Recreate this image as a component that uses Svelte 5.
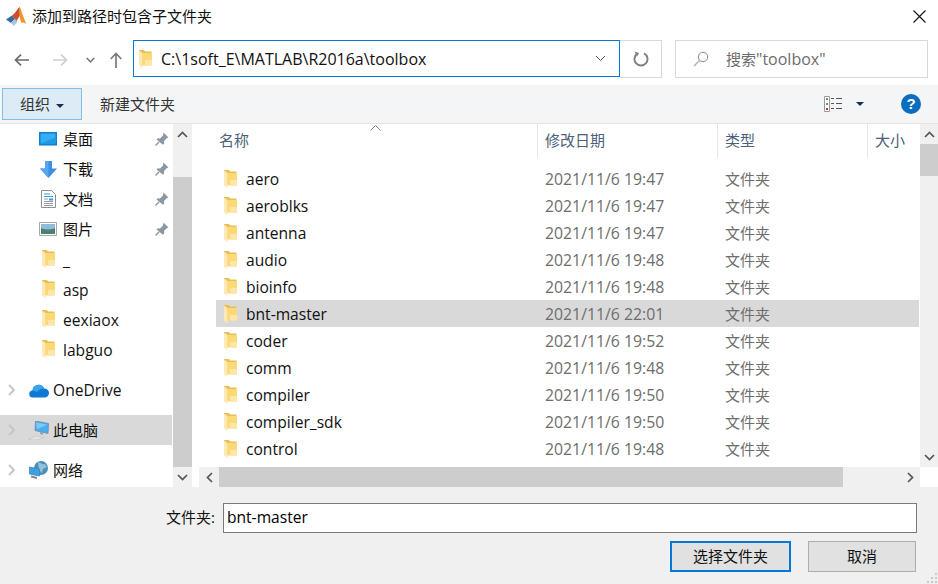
<script>
  const quick = [
    { name: '桌面', icon: 'desktop', pin: true },
    { name: '下载', icon: 'download', pin: true },
    { name: '文档', icon: 'doc', pin: true },
    { name: '图片', icon: 'pic', pin: true },
    { name: '_', icon: 'folder' },
    { name: 'asp', icon: 'folder' },
    { name: 'eexiaox', icon: 'folder' },
    { name: 'labguo', icon: 'folder' }
  ]

  const files = [
    ['aero', '2021/11/6 19:47'],
    ['aeroblks', '2021/11/6 19:47'],
    ['antenna', '2021/11/6 19:47'],
    ['audio', '2021/11/6 19:48'],
    ['bioinfo', '2021/11/6 19:48'],
    ['bnt-master', '2021/11/6 22:01'],
    ['coder', '2021/11/6 19:52'],
    ['comm', '2021/11/6 19:48'],
    ['compiler', '2021/11/6 19:50'],
    ['compiler_sdk', '2021/11/6 19:50'],
    ['control', '2021/11/6 19:48']
  ]
</script>

{#snippet folder()}
  <svg class="ico-folder" width="13" height="18" viewBox="0 0 13 18">
    <path d="M0 0h5l1 1.500h6.500V15H0z" fill="#e9bd57" />
    <path d="M3.500 3h9.500v12.500H3.500z" fill="#fbd977" />
    <path d="M6 10h7v5.500H6z" fill="#fde6a6" />
    <path d="M0 .5l3.500 2.500v15L0 15.500z" fill="#fce9b4" />
  </svg>
{/snippet}

{#snippet chevron()}
  <svg width="10" height="14" viewBox="0 0 10 14"><path d="M2 2l5 5-5 5" fill="none" stroke="#c4c4c4" stroke-width="1.800" /></svg>
{/snippet}

{#snippet pin()}
  <svg width="14" height="14" viewBox="0 0 14 14">
    <path d="M8.500.5l5 5-1.500.5-3 3 .2 2.500-1.200 1.200L1.500 7.500 2.700 6.300 5 6.500l3-3z" fill="#8a98a5" />
    <path d="M4 10L.5 13.500" stroke="#8a98a5" stroke-width="1.400" />
  </svg>
{/snippet}

<div class="dialog">
  <header class="title">
    <svg width="21" height="20" viewBox="0 0 21 20">
      <path d="M0 12.500l6-4 3 3.500-4 4z" fill="#2f6ea5" />
      <path d="M5 16l4-4 2.500 2.500L8 19z" fill="#a9c6dc" />
      <path d="M6 8.500C9 7 11 2 13.500 0l2 6-5 8z" fill="#c9502a" />
      <path d="M13.500 0c2 3 4 11 7 17-2-1.500-4-2-5-1-1.500-4-3-9-2-16z" fill="#f0962c" />
    </svg>
    <span>添加到路径时包含子文件夹</span>
    <svg class="close" width="13" height="13" viewBox="0 0 13 13"><path d="M.5.500l12 12M12.500.500l-12 12" stroke="#111" stroke-width="1.100" /></svg>
  </header>

  <div class="nav">
    <div class="arrows">
      <svg width="15" height="12" viewBox="0 0 15 12"><path d="M15 6H1.500M7 .7L1.500 6 7 11.300" fill="none" stroke="#6a6a6a" stroke-width="1.700" /></svg>
      <svg class="fwd" width="15" height="12" viewBox="0 0 15 12"><path d="M0 6h13.500M8 .7L13.500 6 8 11.300" fill="none" stroke="#cfcfcf" stroke-width="1.700" /></svg>
      <svg class="down" width="9" height="6" viewBox="0 0 9 6"><path d="M.7 1l3.800 3.800L8.300 1" fill="none" stroke="#7a7a7a" stroke-width="1.600" /></svg>
      <svg class="up" width="12" height="16" viewBox="0 0 12 16"><path d="M6 16V1.500M.7 7L6 1.500 11.300 7" fill="none" stroke="#7a7a7a" stroke-width="1.700" /></svg>
    </div>
    <div class="address">
      {@render folder()}
      <span class="path">C:\1soft_E\MATLAB\R2016a\toolbox</span>
      <svg width="11" height="7" viewBox="0 0 11 7"><path d="M1 1l4.500 4.500L10 1" fill="none" stroke="#555" stroke-width="1" /></svg>
    </div>
    <div class="refresh">
      <svg width="16" height="16" viewBox="0 0 16 16"><path d="M5 2.300A6.500 6.500 0 1 0 11 2.300" fill="none" stroke="#808080" stroke-width="1.900" /><path d="M1.500 .5l4.500 1.500-2 3.500z" fill="#808080" /></svg>
    </div>
    <div class="search">
      <svg width="16" height="16" viewBox="0 0 16 16"><circle cx="10" cy="6" r="4.700" fill="none" stroke="#8a8a8a" /><path d="M6.500 9.500L1 15" stroke="#c0a890" stroke-width="1.200" /></svg>
      <span><b>搜索</b>"toolbox"</span>
    </div>
  </div>

  <div class="toolbar">
    <button class="organize"><span>组织</span> <i class="caret"></i></button>
    <span class="newdir">新建文件夹</span>
    <div class="spacer"></div>
    <svg width="19" height="16" viewBox="0 0 19 16">
      <path d="M.5.500h5v15h-5z" fill="#fff" stroke="#9a9a9a" />
      <path d="M2 2h2v2H2zM2 7h2v2H2z" fill="#6a8a6a" /><path d="M2 12h2v2H2z" fill="#c0392b" />
      <path d="M7 2.500h3M12 2.500h6M7 7.500h3M12 7.500h6M7 12.500h3M12 12.500h6" stroke="#555" />
    </svg>
    <i class="caret view"></i>
    <div class="help">?</div>
  </div>

  <main class="body">
    <aside class="tree">
      {#each quick as item}
        <div class="tree-row">
          <div class="tree-icon">
            {#if item.icon === 'folder'}
              {@render folder()}
            {:else if item.icon === 'desktop'}
              <svg width="18" height="14" viewBox="0 0 18 14"><path d="M0 0h18v13.500H0z" fill="#0f7fd0" /><path d="M1.500 1.500h15v10h-15z" fill="#35aef5" /><path d="M1.500 11.500l15-6v6z" fill="#1f98e6" /></svg>
            {:else if item.icon === 'download'}
              <svg width="17" height="17" viewBox="0 0 17 17"><path d="M5 0h7v7.500h5L8.500 17 0 7.500h5z" fill="#3f8fe0" /><path d="M5 0h3.500v17L0 7.500h5z" fill="#5aa5ee" /></svg>
            {:else if item.icon === 'doc'}
              <svg width="15" height="18" viewBox="0 0 15 18"><path d="M.5.500h10l4 4v13H.5z" fill="#fff" stroke="#8f8f8f" /><path d="M3 4h6M3 6.500h9" stroke="#3b97e0" /><path d="M8 8.500h4v2H8z" fill="#3b97e0" /><path d="M3 9h4M3 11.500h9M3 13.500h9M3 15.500h9" stroke="#9a9a9a" /></svg>
            {:else}
              <svg width="18" height="14" viewBox="0 0 18 14"><path d="M.5.500h17v13H.5z" fill="#fff" stroke="#a8a8a8" /><path d="M2 2h14v5H2z" fill="#8fbcd8" /><path d="M2 7h14v5H2z" fill="#5f8f86" /><path d="M2 6l7 3 7-3v6H2z" fill="#4d7f70" /></svg>
            {/if}
          </div>
          <span class="label" class:latin={item.icon === 'folder'}>{item.name}</span>
          {#if item.pin}{@render pin()}{/if}
        </div>
      {/each}
      <div class="tree-root first">
        {@render chevron()}
        <div class="root-icon">
          <svg width="20" height="15" viewBox="0 0 20 15"><path d="M4 14.500a3.500 3.500 0 0 1-.5-7A6 6 0 0 1 15 5.500a4.500 4.500 0 0 1 5 4.500 4.500 4.500 0 0 1-4.500 4.500z" fill="#0f78d4" /><path d="M3.500 7.500A6 6 0 0 1 15 5.500C11 6 9 8 8 9c-2-1.500-3.500-1.500-4.500-1.500z" fill="#38a3ec" /></svg>
        </div>
        <span class="latin">OneDrive</span>
      </div>
      <div class="tree-root sel">
        {@render chevron()}
        <div class="root-icon">
          <svg width="22" height="19" viewBox="0 0 22 19"><path d="M7.500 0l13 2.500-.5 10-13-3z" fill="#48aeee" stroke="#6d8ca6" stroke-width=".8" /><path d="M8 1.500l11.500 2.300L9 8z" fill="#7ccbf6" /><path d="M12 11l3 .7v2l-3-.7z" fill="#8fa0ac" /><path d="M0 18.500l9-3.500 7 1.500-8 2.500z" fill="#e4e4e4" stroke="#bdbdbd" stroke-width=".5" /></svg>
        </div>
        <span>此电脑</span>
      </div>
      <div class="tree-root">
        {@render chevron()}
        <div class="root-icon">
          <svg width="20" height="18" viewBox="0 0 20 18"><circle cx="12" cy="7" r="7" fill="#4e8fb8" /><path d="M9 1c3 1 5 3 7 2l2 3-4 2-1 4-3-3z" fill="#8fc2dc" /><path d="M.5 6l10 2v7l-10-2z" fill="#35a2ee" stroke="#54809f" stroke-width=".8" /><path d="M2 15.500l6 1.500" stroke="#7d8c98" stroke-width="2" /></svg>
        </div>
        <span>网络</span>
      </div>
    </aside>

    <div class="vbar tree-bar">
      <div class="cap"><svg width="11" height="7" viewBox="0 0 11 7"><path d="M1 6l4.500-4.500L10 6" fill="none" stroke="#555" stroke-width="1.700" /></svg></div>
      <div class="thumb"></div>
      <div class="cap bottom"><svg width="11" height="7" viewBox="0 0 11 7"><path d="M1 1l4.500 4.500L10 1" fill="none" stroke="#555" stroke-width="1.700" /></svg></div>
    </div>

    <section class="listing">
      <div class="listing-top">
        <div class="table">
          <div class="head">
            <div class="col name">名称
              <svg class="sort" width="11" height="6" viewBox="0 0 11 6"><path d="M.5 5.500l5-5 5 5" fill="none" stroke="#8a8a8a" /></svg>
            </div>
            <div class="col date">修改日期</div>
            <div class="col type">类型</div>
            <div class="col size">大小</div>
          </div>
          <div class="rows">
            {#each files as f}
              <div class="row" class:sel={f[0] === 'bnt-master'}>
                <div class="cell-name">{@render folder()}<span>{f[0]}</span></div>
                <div class="cell-date">{f[1]}</div>
                <div class="cell-type">文件夹</div>
              </div>
            {/each}
          </div>
        </div>
        <div class="vbar list-bar">
          <div class="cap"><svg width="11" height="7" viewBox="0 0 11 7"><path d="M1 6l4.500-4.500L10 6" fill="none" stroke="#555" stroke-width="1.700" /></svg></div>
          <div class="thumb"></div>
          <div class="track"></div>
          <div class="cap"><svg width="11" height="7" viewBox="0 0 11 7"><path d="M1 1l4.500 4.500L10 1" fill="none" stroke="#555" stroke-width="1.700" /></svg></div>
        </div>
      </div>
      <div class="hbar">
        <div class="hcap"><svg width="7" height="11" viewBox="0 0 7 11"><path d="M6 1L1.500 5.500 6 10" fill="none" stroke="#555" stroke-width="1.700" /></svg></div>
        <div class="hthumb"></div>
        <div class="htrack"></div>
        <div class="hcap"><svg width="7" height="11" viewBox="0 0 7 11"><path d="M1 1l4.500 4.500L1 10" fill="none" stroke="#555" stroke-width="1.700" /></svg></div>
        <div class="corner"></div>
      </div>
    </section>
  </main>

  <footer class="foot">
    <div class="name-row">
      <label for="dir">文件夹:</label>
      <input id="dir" value="bnt-master" />
    </div>
    <div class="btn-row">
      <button class="btn primary">选择文件夹</button>
      <button class="btn">取消</button>
    </div>
    <svg class="grip" width="12" height="12" viewBox="0 0 12 12"><path d="M9 1h2v2H9zM5 5h2v2H5zM9 5h2v2H9zM1 9h2v2H1zM5 9h2v2H5zM9 9h2v2H9z" fill="#c8c8c8" /></svg>
  </footer>
</div>

<style>
  :global(body) {
    margin: 0;
    background: #fff;
  }

  .dialog {
    width: 938px;
    height: 584px;
    position: relative;
    overflow: hidden;
    display: flex;
    flex-direction: column;
    font-family: 'Open Sans', 'Noto Sans CJK SC', sans-serif;
    font-size: 15px;
    color: #111;
  }

  .title {
    height: 33px;
    display: flex;
    align-items: center;
    padding: 0 12px 0 6px;
    gap: 5px;
    flex: none;
  }

  .title span {
    flex: 1;
    padding-bottom: 2px;
  }

  .nav {
    height: 52px;
    flex: none;
    display: flex;
    align-items: flex-start;
    padding-top: 7px;
    box-sizing: border-box;
  }

  .arrows {
    width: 133px;
    height: 38px;
    flex: none;
    display: flex;
    align-items: center;
    padding: 2px 0 0 14px;
    box-sizing: border-box;
  }

  .fwd {
    margin-left: 24px;
  }

  .down {
    margin-left: 18px;
  }

  .up {
    margin-left: 15px;
  }

  .address {
    width: 487px;
    height: 37px;
    flex: none;
    border: 1px solid #0078d7;
    box-sizing: border-box;
    display: flex;
    align-items: center;
    padding: 0 13px 0 5px;
    gap: 9px;
  }

  .path {
    flex: 1;
    font-size: 16px;
  }

  .refresh {
    width: 42px;
    height: 38px;
    flex: none;
    box-sizing: border-box;
    border: 1px solid #d9d9d9;
    border-left: none;
    display: flex;
    align-items: center;
    justify-content: center;
  }

  .search {
    width: 253px;
    height: 38px;
    margin-left: 13px;
    box-sizing: border-box;
    border: 1px solid #d9d9d9;
    display: flex;
    align-items: center;
    padding-left: 17px;
    gap: 17px;
    color: #6d6d6d;
    font-size: 16px;
  }

  .search b {
    font-weight: normal;
    font-size: 15px;
  }

  .toolbar {
    height: 39px;
    flex: none;
    background: #f4f5f7;
    border-bottom: 1px solid #e4e4e4;
    box-sizing: border-box;
    display: flex;
    align-items: center;
    padding: 0 17px 1px 2px;
    color: #333;
  }

  .organize {
    width: 80px;
    height: 32px;
    background: #dcebf5;
    border: 1px solid #7cc0e8;
    font: inherit;
    color: #333;
    padding: 0;
  }

  .caret {
    display: inline-block;
    border: 4px solid transparent;
    border-top: 4px solid #1f2d4d;
    border-bottom: none;
    vertical-align: middle;
    margin-left: 2px;
  }

  .newdir {
    margin-left: 18px;
  }

  .spacer {
    flex: 1;
  }

  .caret.view {
    margin: 0 37px 0 13px;
    border-width: 4px;
    border-bottom: none;
  }

  .help {
    width: 20px;
    height: 20px;
    border-radius: 50%;
    background: #0a6ec0;
    color: #fff;
    font-family: 'Liberation Sans', sans-serif;
    font-weight: bold;
    font-size: 15px;
    text-align: center;
    line-height: 20px;
  }

  .body {
    height: 363px;
    flex: none;
    display: flex;
  }

  .tree {
    width: 173px;
    flex: none;
    overflow: hidden;
  }

  .tree-row {
    height: 30px;
    display: flex;
    align-items: center;
    padding-left: 39px;
    padding-right: 4px;
  }

  .tree-icon {
    width: 18px;
    display: flex;
    justify-content: center;
    flex: none;
  }

  .label {
    flex: 1;
    margin-left: 6px;
    padding-bottom: 1px;
  }

  .label.latin {
    padding: 2px 0 0;
  }

  .latin {
    font-size: 15.600px;
  }

  .tree-root {
    height: 30px;
    display: flex;
    align-items: center;
    padding-left: 7px;
    margin-top: 10px;
  }

  .tree-root span {
    padding-bottom: 2px;
  }

  .tree-root span.latin {
    padding-bottom: 0;
  }

  .root-icon {
    width: 22px;
    margin: 0 3px 0 11px;
    display: flex;
    justify-content: center;
    flex: none;
  }

  .tree-root.first {
    margin-top: 11px;
  }

  .tree-root.sel {
    background: #d9d9d9;
    width: 172px;
    box-sizing: border-box;
  }

  .vbar {
    display: flex;
    flex-direction: column;
    background: #f0f0f0;
  }

  .tree-bar {
    width: 19px;
    flex: none;
  }

  .cap {
    height: 20px;
    flex: none;
    display: flex;
    align-items: center;
    justify-content: center;
  }

  .tree-bar .cap:first-child {
    height: 53px;
    align-items: flex-start;
    padding-top: 7px;
    box-sizing: border-box;
  }

  .tree-bar .thumb {
    flex: 1;
    background: #cdcdcd;
  }

  .listing {
    flex: 1;
    min-width: 0;
    display: flex;
    flex-direction: column;
  }

  .listing-top {
    height: 343px;
    display: flex;
  }

  .table {
    flex: 1;
    min-width: 0;
    overflow: hidden;
  }

  .head {
    height: 34px;
    display: flex;
    color: #4c607a;
  }

  .col {
    box-sizing: border-box;
    padding: 5px 0 0 7px;
    border-right: 1px solid #e5e5e5;
    position: relative;
  }

  .col.name {
    width: 346px;
    padding-left: 27px;
  }

  .sort {
    position: absolute;
    left: 178px;
    top: 1px;
  }

  .col.date {
    width: 180px;
  }

  .col.type {
    width: 150px;
  }

  .col.size {
    border: none;
  }

  .rows {
    padding-top: 7px;
  }

  .row {
    height: 27px;
    margin-left: 24px;
    display: flex;
    align-items: center;
    color: #6d6d6d;
  }

  .row.sel {
    background: #d9d9d9;
    width: 703px;
  }

  .cell-name {
    width: 329px;
    display: flex;
    align-items: center;
    color: #111;
    padding-left: 8px;
    box-sizing: border-box;
    gap: 9px;
    font-size: 15.600px;
  }

  .cell-date {
    width: 180px;
    font-size: 15.800px;
  }

  .cell-type {
    padding-bottom: 1px;
  }

  .list-bar {
    width: 18px;
    flex: none;
  }

  .list-bar .thumb {
    height: 32px;
    background: #cdcdcd;
  }

  .track {
    flex: 1;
  }

  .hbar {
    height: 20px;
    display: flex;
    margin-left: 7px;
    background: #f0f0f0;
  }

  .hcap {
    width: 20px;
    display: flex;
    align-items: center;
    justify-content: center;
  }

  .hthumb {
    width: 624px;
    background: #cdcdcd;
  }

  .htrack {
    flex: 1;
  }

  .corner {
    width: 18px;
    background: #fff;
  }

  .foot {
    flex: 1;
    background: #f0f0f0;
    display: flex;
    flex-direction: column;
    position: relative;
  }

  .name-row {
    display: flex;
    align-items: center;
    padding: 16px 21px 0 166px;
    gap: 8px;
  }

  label {
    padding-bottom: 3px;
  }

  input {
    flex: 1;
    height: 30px;
    box-sizing: border-box;
    border: 1px solid #7a7a7a;
    font: inherit;
    font-size: 15.600px;
    padding: 0 3px 3px;
    outline: none;
    min-width: 0;
  }

  .btn-row {
    display: flex;
    justify-content: flex-end;
    gap: 17px;
    padding: 8px 22px 0 0;
  }

  .btn {
    width: 108px;
    height: 31px;
    background: #e1e1e1;
    border: 1px solid #adadad;
    font: inherit;
    color: #111;
    padding: 0 0 3px;
  }

  .btn.primary {
    width: 121px;
    border: 2px solid #0078d7;
  }

  .grip {
    position: absolute;
    right: 0;
    bottom: 0;
  }
</style>
